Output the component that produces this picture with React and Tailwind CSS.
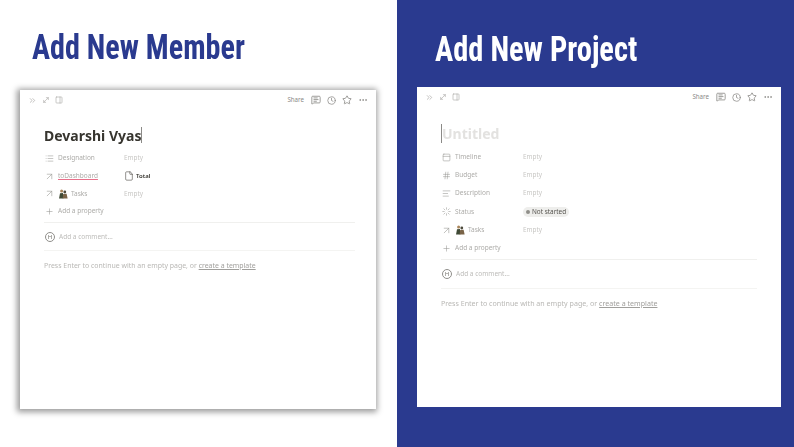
import { ArrowUpRight, Plus, List, PanelTop, Hash, AlignLeft, Loader, File, MessageSquareText, Clock, Star, MoreHorizontal, ChevronsRight, PanelRight, MoveDiagonal } from 'lucide-react';

function TasksEmoji() {
  return (
    <svg width="10" height="10" viewBox="0 0 10 10" className="shrink-0">
      <circle cx="3.6" cy="2" r="1.5" fill="#a9855a" />
      <circle cx="6.8" cy="3" r="1.4" fill="#4d4a3c" />
      <path d="M1 9.5 L2 4.2 L5 4 L5.4 9.5 Z" fill="#3f4a35" />
      <path d="M4.6 9.5 L5.2 5 L8.6 4.8 L9.6 9.5 Z" fill="#7a6448" />
    </svg>
  );
}

function Row({ icon, label, children, rowClass, labelClass }) {
  return (
    <div className={`flex items-center ${rowClass}`}>
      <div className="w-[13px] shrink-0 text-[#9a9995]">{icon}</div>
      <div className={`shrink-0 flex items-center gap-[3px] text-[6.5px] text-[#adacA9] ${labelClass}`}>{label}</div>
      <div className="text-[6.4px] text-[#c8c7c4]">{children}</div>
    </div>
  );
}

function TopBar() {
  return (
    <div className="flex items-center justify-between h-[20px] pl-[8px] pr-[8px] text-[#8b8a87]">
      <div className="flex items-center gap-[5px] text-[#b0afac]">
        <ChevronsRight size={9} />
        <MoveDiagonal size={8} />
        <PanelRight size={8} />
      </div>
      <div className="flex items-center gap-[6px]">
        <span className="text-[6.2px] text-[#8b8a87] mr-[1px]">Share</span>
        <MessageSquareText size={10} />
        <Clock size={9} />
        <Star size={10} />
        <MoreHorizontal size={10} />
      </div>
    </div>
  );
}

function Comment() {
  return (
    <div className="flex items-center gap-[4px]">
      <div className="w-[10px] h-[10px] rounded-full border border-[#8f8e8a] text-[6px] leading-none flex items-center justify-center text-[#77766f]">H</div>
      <span className="text-[6.5px] text-[#bdbcb9]">Add a comment...</span>
    </div>
  );
}

function Hint({ sizeClass }) {
  return (
    <div className={`text-[#b9b8b5] whitespace-nowrap ${sizeClass}`}>
      Press Enter to continue with an empty page, or <span className="underline text-[#a09f9c]">create a template</span>
    </div>
  );
}

const ic = { size: 9, strokeWidth: 1.5 };
const arrow = { size: 11, strokeWidth: 1.3, className: '-ml-[1px]' };

export default function App() {
  return (
    <div className="flex w-[794px] h-[447px] overflow-hidden font-['Noto_Sans',sans-serif]">
      {/* left: member */}
      <div className="w-[397px] shrink-0 bg-white px-[20px] pt-[27px]">
        <h1 className="h-[63px] ml-[12px] text-[35px] leading-[42px] font-bold text-[#2a3a8f] font-['Liberation_Sans_Narrow','Roboto_Condensed',sans-serif] whitespace-nowrap origin-left scale-x-[0.862]">
          Add New Member
        </h1>
        <div className="w-[356px] h-[319px] bg-white shadow-[-1px_1px_6px_2px_rgba(0,0,0,0.4)]">
          <TopBar />
          <div className="pl-[24px] pr-[21px] pt-[14px] blur-[0.4px]">
            <div className="flex items-center h-[22px] text-[14px] font-bold text-[#37352f]">
              Devarshi Vyas<span className="w-px h-[16px] bg-[#8b8a87]" />
            </div>
            <div className="mt-[3px] ml-[1px]">
              <Row rowClass="h-[18px]" labelClass="w-[66px]" icon={<List {...ic} />} label="Designation">Empty</Row>
              <Row rowClass="h-[18px]" labelClass="w-[66px]" icon={<ArrowUpRight {...arrow} />} label={<span className="underline decoration-[#e8708a]">toDashboard</span>}>
                <span className="flex items-center gap-[2px] text-[#37352f] font-semibold text-[6px]">
                  <File size={10} strokeWidth={1.3} />Total
                </span>
              </Row>
              <Row rowClass="h-[17px]" labelClass="w-[66px]" icon={<ArrowUpRight {...arrow} />} label={<><TasksEmoji />Tasks</>}>Empty</Row>
              <Row rowClass="h-[18px]" labelClass="w-[66px]" icon={<Plus {...ic} />} label="Add a property" />
            </div>
            <div className="mt-[2px] border-t border-[#f0f0ee] h-[28px] flex items-center pl-[1px]"><Comment /></div>
            <div className="border-t border-[#f4f4f2] pt-[10px]"><Hint sizeClass="text-[6.95px]" /></div>
          </div>
        </div>
      </div>

      {/* right: project */}
      <div className="w-[397px] shrink-0 bg-[#2a3a8f] pl-[20px] pt-[27px]">
        <h1 className="h-[60px] ml-[18px] text-[35px] leading-[46px] font-bold text-white font-['Liberation_Sans_Narrow','Roboto_Condensed',sans-serif] whitespace-nowrap origin-left scale-x-[0.87]">
          Add New Project
        </h1>
        <div className="w-[364px] h-[320px] bg-white">
          <TopBar />
          <div className="pl-[24px] pr-[24px] pt-[14px] blur-[0.4px]">
            <div className="flex items-center h-[24px] text-[14px] font-bold text-[#e3e2e0]">
              <span className="w-px h-[19px] bg-[#8b8a87]" />Untitled
            </div>
            <div className="mt-[3px] ml-[1px]">
              <Row rowClass="h-[18px]" labelClass="w-[68px]" icon={<PanelTop {...ic} />} label="Timeline">Empty</Row>
              <Row rowClass="h-[18px]" labelClass="w-[68px]" icon={<Hash {...ic} />} label="Budget">Empty</Row>
              <Row rowClass="h-[18px]" labelClass="w-[68px]" icon={<AlignLeft {...ic} />} label="Description">Empty</Row>
              <Row rowClass="h-[19px]" labelClass="w-[68px]" icon={<Loader {...ic} />} label="Status">
                <span className="inline-flex items-center gap-[2px] h-[10px] px-[3px] rounded-full bg-[#eeeeec] text-[#55534e]">
                  <span className="w-[4px] h-[4px] rounded-full bg-[#8f8e8a]" />Not started
                </span>
              </Row>
              <Row rowClass="h-[18px]" labelClass="w-[68px]" icon={<ArrowUpRight {...arrow} />} label={<><TasksEmoji />Tasks</>}>Empty</Row>
              <Row rowClass="h-[18px]" labelClass="w-[68px]" icon={<Plus {...ic} />} label="Add a property" />
            </div>
            <div className="mt-[2px] border-t border-[#f0f0ee] h-[29px] flex items-center pl-[1px]"><Comment /></div>
            <div className="border-t border-[#f4f4f2] pt-[9px]"><Hint sizeClass="text-[7.1px]" /></div>
          </div>
        </div>
      </div>
    </div>
  );
}
